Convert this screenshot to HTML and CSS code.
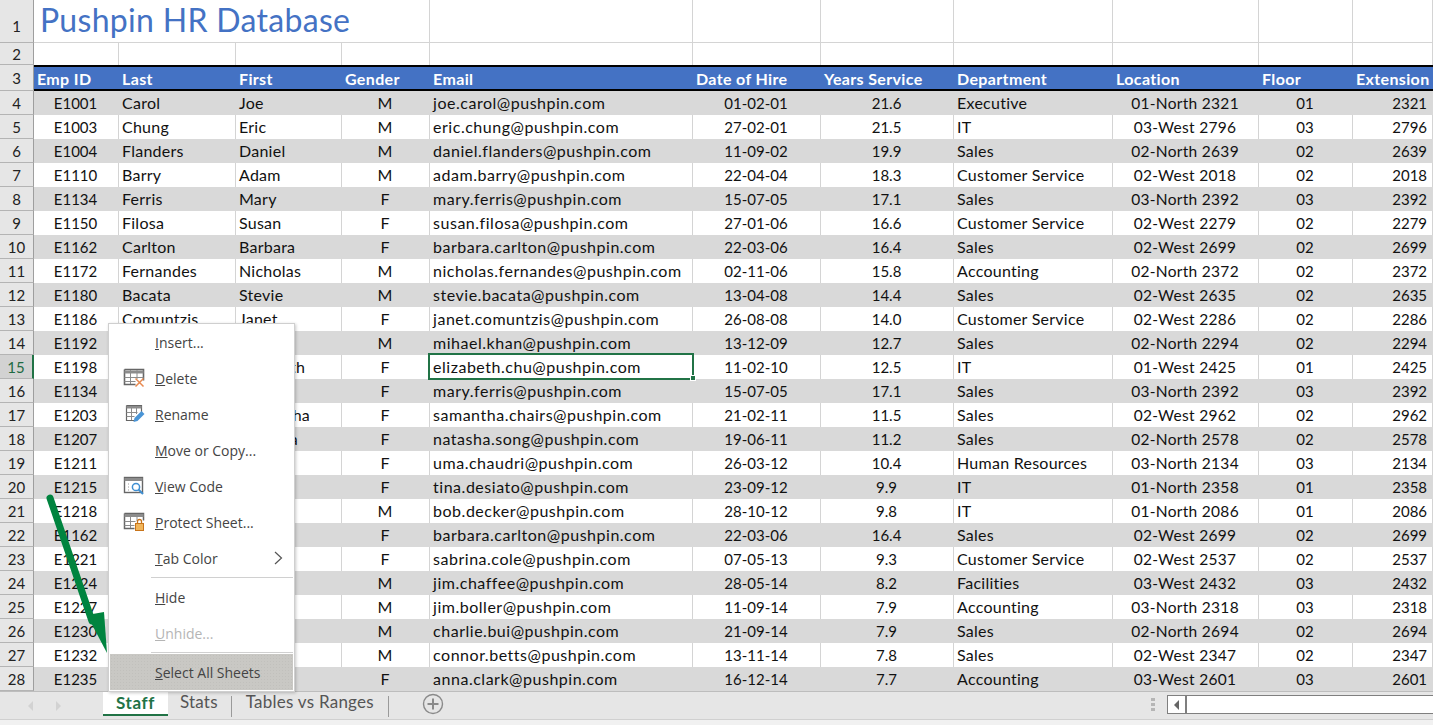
FILE: index.html
```html
<!DOCTYPE html>
<html lang="en">
<head>
<meta charset="utf-8">
<title>Pushpin HR Database</title>
<link rel="stylesheet" href="styles.css">
</head>
<body>
<div class="app">
<main class="sheet">
<table class="grid">
<colgroup><col class="c0"><col class="c1"><col class="c2"><col class="c3"><col class="c4"><col class="c5"><col class="c6"><col class="c7"><col class="c8"><col class="c9"><col class="c10"><col class="c11"></colgroup>
<tbody>
<tr class="r1"><th class="rh">1</th><td colspan="4" class="title">Pushpin HR Database</td><td></td><td></td><td></td><td></td><td></td><td></td><td></td></tr>
<tr class="r2"><th class="rh">2</th><td></td><td></td><td></td><td></td><td></td><td></td><td></td><td></td><td></td><td></td><td></td></tr>
<tr class="head"><th class="rh">3</th><td>Emp ID</td><td>Last</td><td>First</td><td>Gender</td><td>Email</td><td>Date of Hire</td><td>Years Service</td><td>Department</td><td>Location</td><td>Floor</td><td>Extension</td></tr>
<tr class="row"><th class="rh">4</th><td>E1001</td><td>Carol</td><td>Joe</td><td>M</td><td>joe.carol@pushpin.com</td><td>01-02-01</td><td>21.6</td><td>Executive</td><td>01-North 2321</td><td>01</td><td>2321</td></tr>
<tr class="row"><th class="rh">5</th><td>E1003</td><td>Chung</td><td>Eric</td><td>M</td><td>eric.chung@pushpin.com</td><td>27-02-01</td><td>21.5</td><td>IT</td><td>03-West 2796</td><td>03</td><td>2796</td></tr>
<tr class="row"><th class="rh">6</th><td>E1004</td><td>Flanders</td><td>Daniel</td><td>M</td><td>daniel.flanders@pushpin.com</td><td>11-09-02</td><td>19.9</td><td>Sales</td><td>02-North 2639</td><td>02</td><td>2639</td></tr>
<tr class="row"><th class="rh">7</th><td>E1110</td><td>Barry</td><td>Adam</td><td>M</td><td>adam.barry@pushpin.com</td><td>22-04-04</td><td>18.3</td><td>Customer Service</td><td>02-West 2018</td><td>02</td><td>2018</td></tr>
<tr class="row"><th class="rh">8</th><td>E1134</td><td>Ferris</td><td>Mary</td><td>F</td><td>mary.ferris@pushpin.com</td><td>15-07-05</td><td>17.1</td><td>Sales</td><td>03-North 2392</td><td>03</td><td>2392</td></tr>
<tr class="row"><th class="rh">9</th><td>E1150</td><td>Filosa</td><td>Susan</td><td>F</td><td>susan.filosa@pushpin.com</td><td>27-01-06</td><td>16.6</td><td>Customer Service</td><td>02-West 2279</td><td>02</td><td>2279</td></tr>
<tr class="row"><th class="rh">10</th><td>E1162</td><td>Carlton</td><td>Barbara</td><td>F</td><td>barbara.carlton@pushpin.com</td><td>22-03-06</td><td>16.4</td><td>Sales</td><td>02-West 2699</td><td>02</td><td>2699</td></tr>
<tr class="row"><th class="rh">11</th><td>E1172</td><td>Fernandes</td><td>Nicholas</td><td>M</td><td>nicholas.fernandes@pushpin.com</td><td>02-11-06</td><td>15.8</td><td>Accounting</td><td>02-North 2372</td><td>02</td><td>2372</td></tr>
<tr class="row"><th class="rh">12</th><td>E1180</td><td>Bacata</td><td>Stevie</td><td>M</td><td>stevie.bacata@pushpin.com</td><td>13-04-08</td><td>14.4</td><td>Sales</td><td>02-West 2635</td><td>02</td><td>2635</td></tr>
<tr class="row"><th class="rh">13</th><td>E1186</td><td>Comuntzis</td><td>Janet</td><td>F</td><td>janet.comuntzis@pushpin.com</td><td>26-08-08</td><td>14.0</td><td>Customer Service</td><td>02-West 2286</td><td>02</td><td>2286</td></tr>
<tr class="row"><th class="rh">14</th><td>E1192</td><td>Khan</td><td>Mihael</td><td>M</td><td>mihael.khan@pushpin.com</td><td>13-12-09</td><td>12.7</td><td>Sales</td><td>02-North 2294</td><td>02</td><td>2294</td></tr>
<tr class="row"><th class="rh active">15</th><td>E1198</td><td>Chu</td><td>Elizabeth</td><td>F</td><td class="selected">elizabeth.chu@pushpin.com</td><td>11-02-10</td><td>12.5</td><td>IT</td><td>01-West 2425</td><td>01</td><td>2425</td></tr>
<tr class="row"><th class="rh">16</th><td>E1134</td><td>Ferris</td><td>Mary</td><td>F</td><td>mary.ferris@pushpin.com</td><td>15-07-05</td><td>17.1</td><td>Sales</td><td>03-North 2392</td><td>03</td><td>2392</td></tr>
<tr class="row"><th class="rh">17</th><td>E1203</td><td>Chairs</td><td>Samantha</td><td>F</td><td>samantha.chairs@pushpin.com</td><td>21-02-11</td><td>11.5</td><td>Sales</td><td>02-West 2962</td><td>02</td><td>2962</td></tr>
<tr class="row"><th class="rh">18</th><td>E1207</td><td>Song</td><td>Natasha</td><td>F</td><td>natasha.song@pushpin.com</td><td>19-06-11</td><td>11.2</td><td>Sales</td><td>02-North 2578</td><td>02</td><td>2578</td></tr>
<tr class="row"><th class="rh">19</th><td>E1211</td><td>Chaudri</td><td>Uma</td><td>F</td><td>uma.chaudri@pushpin.com</td><td>26-03-12</td><td>10.4</td><td>Human Resources</td><td>03-North 2134</td><td>03</td><td>2134</td></tr>
<tr class="row"><th class="rh">20</th><td>E1215</td><td>Desiato</td><td>Tina</td><td>F</td><td>tina.desiato@pushpin.com</td><td>23-09-12</td><td>9.9</td><td>IT</td><td>01-North 2358</td><td>01</td><td>2358</td></tr>
<tr class="row"><th class="rh">21</th><td>E1218</td><td>Decker</td><td>Bob</td><td>M</td><td>bob.decker@pushpin.com</td><td>28-10-12</td><td>9.8</td><td>IT</td><td>01-North 2086</td><td>01</td><td>2086</td></tr>
<tr class="row"><th class="rh">22</th><td>E1162</td><td>Carlton</td><td>Barbara</td><td>F</td><td>barbara.carlton@pushpin.com</td><td>22-03-06</td><td>16.4</td><td>Sales</td><td>02-West 2699</td><td>02</td><td>2699</td></tr>
<tr class="row"><th class="rh">23</th><td>E1221</td><td>Cole</td><td>Sabrina</td><td>F</td><td>sabrina.cole@pushpin.com</td><td>07-05-13</td><td>9.3</td><td>Customer Service</td><td>02-West 2537</td><td>02</td><td>2537</td></tr>
<tr class="row"><th class="rh">24</th><td>E1224</td><td>Chaffee</td><td>Jim</td><td>M</td><td>jim.chaffee@pushpin.com</td><td>28-05-14</td><td>8.2</td><td>Facilities</td><td>03-West 2432</td><td>03</td><td>2432</td></tr>
<tr class="row"><th class="rh">25</th><td>E1227</td><td>Boller</td><td>Jim</td><td>M</td><td>jim.boller@pushpin.com</td><td>11-09-14</td><td>7.9</td><td>Accounting</td><td>03-North 2318</td><td>03</td><td>2318</td></tr>
<tr class="row"><th class="rh">26</th><td>E1230</td><td>Bui</td><td>Charlie</td><td>M</td><td>charlie.bui@pushpin.com</td><td>21-09-14</td><td>7.9</td><td>Sales</td><td>02-North 2694</td><td>02</td><td>2694</td></tr>
<tr class="row"><th class="rh">27</th><td>E1232</td><td>Betts</td><td>Connor</td><td>M</td><td>connor.betts@pushpin.com</td><td>13-11-14</td><td>7.8</td><td>Sales</td><td>02-West 2347</td><td>02</td><td>2347</td></tr>
<tr class="row"><th class="rh">28</th><td>E1235</td><td>Clark</td><td>Anna</td><td>F</td><td>anna.clark@pushpin.com</td><td>16-12-14</td><td>7.7</td><td>Accounting</td><td>03-West 2601</td><td>03</td><td>2601</td></tr>
</tbody>
</table>
</main>

<footer class="tabbar">
  <div class="navs">
    <svg width="8" height="10" viewBox="0 0 8 10"><path d="M6 0v10L1 5z" fill="#d2d2d2"/></svg>
    <svg width="8" height="10" viewBox="0 0 8 10"><path d="M2 0v10l5-5z" fill="#d2d2d2"/></svg>
  </div>
  <div class="tab current">Staff</div>
  <div class="tab">Stats</div>
  <div class="tab last">Tables vs Ranges</div>
  <svg class="plus" width="22" height="22" viewBox="0 0 22 22"><circle cx="11" cy="11" r="9.5" fill="none" stroke="#8a8a8a" stroke-width="1.4"/><path d="M11 5.5v11M5.5 11h11" stroke="#8a8a8a" stroke-width="2"/></svg>
  <div class="spacer"></div>
  <div class="dots"><i></i><i></i><i></i></div>
  <div class="hscroll"><div class="hbtn"><svg width="6" height="10" viewBox="0 0 6 10"><path d="M5 0v10L0 5z" fill="#666"/></svg></div></div>
</footer>
<div class="strip"></div>

<nav class="menu">
  <div class="item"><span class="ico"></span><span><u>I</u>nsert...</span></div>
  <div class="item"><span class="ico">
    <svg width="22" height="20" viewBox="0 0 22 20"><path d="M1.500 1.500h19v11M1.500 1.500v15h11" fill="none" stroke="#666" stroke-width="1.600"/><path d="M1.500 2.500h19v3h-19z" fill="#8c8c8c"/><path d="M1.500 9.500h19M1.500 13.500h11M7.500 2v14M14 2v9" stroke="#8c8c8c" stroke-width="1"/><path d="M12.500 10.500l8 8M20.500 10.500l-8 8" stroke="#e8894f" stroke-width="1.500"/></svg>
  </span><span><u>D</u>elete</span></div>
  <div class="item"><span class="ico">
    <svg width="22" height="20" viewBox="0 0 22 20"><path d="M3.500 1.500h15v7M3.500 1.500v15h8" fill="none" stroke="#666" stroke-width="1.200"/><path d="M3.500 2h15v2.500h-15z" fill="#8c8c8c"/><path d="M3.500 8.500h11M3.500 12.500h8M8.500 4v12M13.500 4v6" stroke="#8c8c8c" stroke-width="1"/><path d="M10.500 18l1-4 7-7 3 3-7 7z" fill="#4a95d6"/></svg>
  </span><span><u>R</u>ename</span></div>
  <div class="item"><span class="ico"></span><span><u>M</u>ove or Copy...</span></div>
  <div class="item"><span class="ico">
    <svg width="22" height="20" viewBox="0 0 22 20"><rect x="1.500" y="1.500" width="18" height="15" fill="#fff" stroke="#666" stroke-width="1.400"/><path d="M1.500 2h18v3h-18z" fill="#8c8c8c"/><path d="M5 8h1M5 11h1M5 14h1" stroke="#999" stroke-width="1.200"/><circle cx="13" cy="11" r="3.600" fill="#fff" stroke="#3f8fd2" stroke-width="1.500"/><path d="M15.500 13.500l4.500 4.500" stroke="#3f8fd2" stroke-width="2"/></svg>
  </span><span><u>V</u>iew Code</span></div>
  <div class="item"><span class="ico">
    <svg width="22" height="20" viewBox="0 0 22 20"><path d="M1.500 1.500h19v7M1.500 1.500v15h10" fill="none" stroke="#666" stroke-width="1.500"/><path d="M1.500 2h19v3h-19z" fill="#8c8c8c"/><path d="M1.500 9.500h11M1.500 13.500h10M7.500 4v12M14 4v5" stroke="#8c8c8c" stroke-width="1"/><rect x="12.500" y="11.500" width="8" height="7" fill="#f0b55a" stroke="#c8741a"/><path d="M14.500 11.500v-2a2 2 0 0 1 4 0v2" fill="none" stroke="#c8741a" stroke-width="1.300"/></svg>
  </span><span><u>P</u>rotect Sheet...</span></div>
  <div class="item"><span class="ico"></span><span><u>T</u>ab Color</span><svg class="chev" width="9" height="14" viewBox="0 0 9 14"><path d="M1 1l6.500 6L1 13" fill="none" stroke="#555" stroke-width="1.200"/></svg></div>
  <div class="sep"></div>
  <div class="item"><span class="ico"></span><span><u>H</u>ide</span></div>
  <div class="item off"><span class="ico"></span><span><u>U</u>nhide...</span></div>
  <div class="sep"></div>
  <div class="item hot"><span class="ico"></span><span><u>S</u>elect All Sheets</span></div>
</nav>

<svg class="arrow" width="70" height="170" viewBox="0 0 70 170"><path d="M5 5L47 128" stroke="#00843f" stroke-width="7" stroke-linecap="round" fill="none"/><path d="M42 122L59 119L62 160z" fill="#00843f"/></svg>
</div>
</body>
</html>
```
FILE: styles.css
```css
* { box-sizing: border-box; }
html, body { margin: 0; padding: 0; height: 725px; overflow: hidden; background: #fff; }
.app { position: relative; width: 1433px; height: 725px; display: flex; flex-direction: column; overflow: hidden; font-family: "Lato", "Liberation Sans", sans-serif; color: #111; }
.sheet { height: 691px; overflow: hidden; flex: none; }
.grid { border-collapse: separate; border-spacing: 0; table-layout: fixed; width: 1433px; font-size: 15px; }
.c0 { width: 34px; } .c1 { width: 85px; } .c2 { width: 117px; } .c3 { width: 106px; } .c4 { width: 88px; } .c5 { width: 263px; }
.c6 { width: 128px; } .c7 { width: 133px; } .c8 { width: 159px; } .c9 { width: 146px; } .c10 { width: 94px; } .c11 { width: 80px; }
td { padding: 0 4px 0 3px; white-space: nowrap; overflow: hidden; border-right: 1px solid #d4d4d4; }
.rh { background: #e6e6e6; border-right: 1px solid #9e9e9e; border-bottom: 1px solid #b4b4b4; font-weight: 400; padding: 0; color: #222; text-align: center; font-size: 15px; }
.rh.active { background: #d2d2d2; color: #1f6b43; border-right: 2px solid #217346; }
.r1 { height: 43px; }
.r1 td { border-bottom: 1px solid #d4d4d4; }
.r1 .rh { vertical-align: bottom; padding-bottom: 7px; }
.title { font-size: 32px; color: #4472c4; line-height: 40px; padding: 0 0 2px 6px; letter-spacing: 0.3px; overflow: visible; }
.r2 { height: 22px; }
.head { height: 26px; }
.head td { background: #4472c4; color: #fff; font-weight: 700; font-size: 16px; line-height: 20px; letter-spacing: 0.35px; padding-top: 1px; border-top: 2px solid #000; border-bottom: 2px solid #000; border-right: 0; }
.head .rh { border-bottom: 1px solid #b4b4b4; }
.head td:last-child { text-align: right; }
.row { height: 24px; }
.row td { line-height: 23px; }
.row:nth-child(even) td { background: #d9d9d9; border-right-color: #d9d9d9; }
.row td:nth-child(2), .row td:nth-child(5), .row td:nth-child(7), .row td:nth-child(8), .row td:nth-child(10), .row td:nth-child(11) { text-align: center; }
.row td:nth-child(3), .row td:nth-child(4), .row td:nth-child(5), .row td:nth-child(6), .row td:nth-child(9) { font-size: 16px; line-height: 23px; padding-bottom: 1px; }
.row td:nth-child(3), .row td:nth-child(4), .row td:nth-child(9) { letter-spacing: 0.25px; }
.row td:nth-child(6) { letter-spacing: 0.52px; }
.row td:nth-child(10) { font-size: 15.5px; letter-spacing: 0.3px; }
.row td:last-child { text-align: right; padding-right: 5px; }
.selected { position: relative; overflow: visible; }
.selected::after { content: ""; box-sizing: border-box; position: absolute; left: -2px; top: -2px; width: 266px; height: 27px; border: 2px solid #217346; }
.selected::before { content: ""; box-sizing: border-box; position: absolute; left: 260px; top: 20px; width: 6px; height: 6px; background: #217346; border: 1px solid #fff; z-index: 1; }
.tabbar { height: 29px; flex: none; display: flex; align-items: stretch; background: #e6e6e6; border-bottom: 1px solid #d0d0d0; border-top: 1px solid #bdbdbd; }
.navs { width: 103px; padding-left: 27px; display: flex; gap: 19px; align-items: center; flex: none; }
.tab { font-size: 17px; color: #555; padding: 0 14px 3px 12px; display: flex; align-items: center; position: relative; letter-spacing: 0.2px; margin-bottom: 5px; }
.tab.last { padding-left: 14px; padding-right: 15px; letter-spacing: 0.25px; }
.tab::after { content: ""; position: absolute; right: 0; top: 4px; bottom: -3px; width: 1px; background: #9a9a9a; }
.tab.current { background: #fff; color: #217346; font-weight: 700; letter-spacing: 0.6px; width: 65px; border-bottom: 2px solid #217346; justify-content: center; margin-bottom: 3px; padding: 0 0 1px; }
.tab.current::after { display: none; }
.plus { align-self: center; margin: 0 0 4px 33px; flex: none; }
.spacer { flex: 1; }
.dots { display: flex; flex-direction: column; gap: 2px; justify-content: center; margin: 0 12px 2px 0; }
.dots i { display: block; width: 4px; height: 3px; background: #b5b5b5; }
.hscroll { width: 266px; height: 19px; align-self: center; margin-bottom: 2px; background: #fff; border: 1px solid #7f7f7f; border-right: 0; display: flex; }
.hbtn { width: 19px; border-right: 2px solid #7f7f7f; display: flex; align-items: center; justify-content: center; }
.strip { flex: 1; background: #f1f1f1; }
.menu { position: absolute; left: 108px; top: 323px; width: 187px; height: 369px; padding: 0 1px; background: #fff; border: 1px solid #cfcfcf; box-shadow: 1px 1px 3px rgba(0,0,0,.22); font-family: "Open Sans", "Noto Sans", sans-serif; font-size: 14px; color: #444; }
.item { height: 36px; display: flex; align-items: center; position: relative; }
.ico { width: 45px; flex: none; display: flex; align-items: center; padding-left: 13px; }
.chev { position: absolute; right: 10px; top: 11px; }
.sep { height: 3px; margin-left: 41px; display: flex; align-items: center; }
.sep::before { content: ""; display: block; width: 100%; border-top: 1px solid #d0d0d0; }
.off { color: #b5b5b5; }
.hot { background-color: #c9c8c4; background-image: radial-gradient(#c1c0bc 0.6px, transparent 0.7px); background-size: 3px 3px; }
.arrow { position: absolute; left: 45px; top: 493px; pointer-events: none; }
```
